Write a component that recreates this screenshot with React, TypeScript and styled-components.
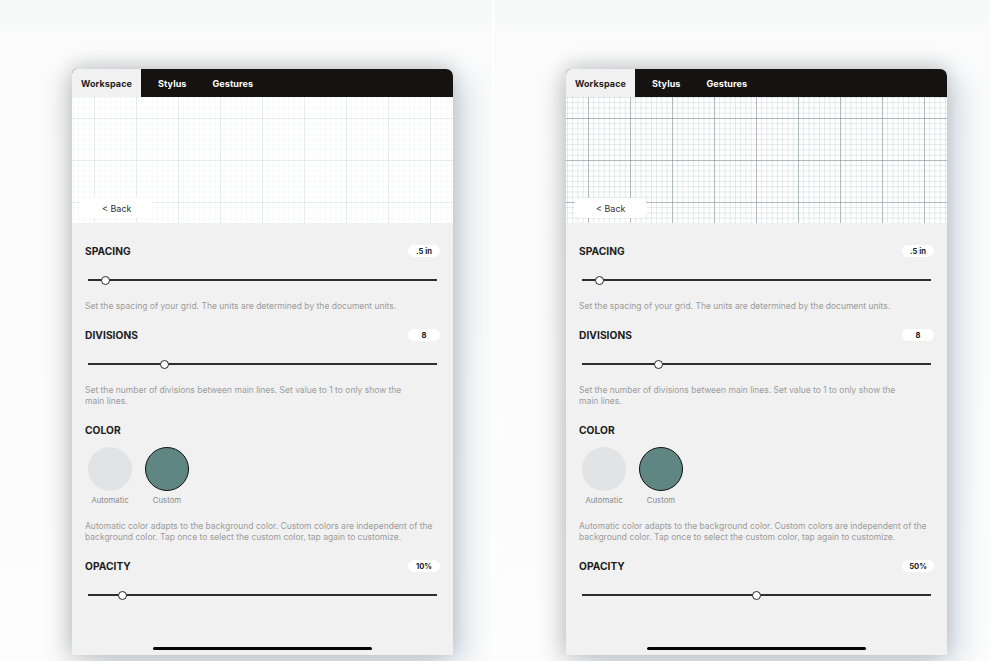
import React from "react";
import styled, { createGlobalStyle } from "styled-components";

const GlobalStyle = createGlobalStyle`
  html, body { margin: 0; padding: 0; background: #ffffff; }
  body { font-family: Inter, "Noto Sans", "Liberation Sans", sans-serif; }
  * { box-sizing: border-box; }
`;

const Page = styled.div`
  display: flex;
  width: 992px;
  height: 661px;
  overflow: hidden;
  background: #ffffff;
`;

const Half = styled.div<{ $w: number }>`
  width: ${(p) => p.$w}px;
  height: 661px;
  padding: 69px 0 0 72px;
  background: linear-gradient(180deg, #f7f8f8 0px, #fbfbfb 40px, #fdfdfd 100%);
  border-right: 2px solid #ffffff;
  flex-shrink: 0;
`;

const Panel = styled.div`
  width: 381px;
  height: 586px;
  position: relative;
  display: flex;
  flex-direction: column;
  background: #f1f1f1;
  border-radius: 5px 7px 0 0;
  box-shadow: 0 -6px 18px rgba(40, 40, 40, 0.16), -10px 8px 22px rgba(60, 60, 60, 0.14),
    16px 10px 28px rgba(140, 168, 190, 0.32);
`;

const TabBar = styled.div`
  height: 28px;
  display: flex;
  align-items: stretch;
  background: #151311;
  border-radius: 5px 7px 0 0;
  overflow: hidden;
`;

const Tab = styled.div<{ $active?: boolean; $lead: number }>`
  display: flex;
  align-items: center;
  justify-content: ${(p) => (p.$active ? "center" : "flex-start")};
  width: ${(p) => (p.$active ? "69px" : "auto")};
  padding-left: ${(p) => p.$lead}px;
  background: ${(p) => (p.$active ? "#f1f1f1" : "transparent")};
  color: ${(p) => (p.$active ? "#1e1e1e" : "#ffffff")};
  font-size: 9px;
  font-weight: 700;
  letter-spacing: 0.1px;
`;

const Canvas = styled.div<{ $major: string; $minor: string }>`
  height: 126px;
  position: relative;
  background-color: #ffffff;
  background-image: linear-gradient(to right, ${(p) => p.$major} 1px, transparent 1px),
    linear-gradient(to bottom, ${(p) => p.$major} 1px, transparent 1px),
    linear-gradient(to right, ${(p) => p.$minor} 1px, transparent 1px),
    linear-gradient(to bottom, ${(p) => p.$minor} 1px, transparent 1px);
  background-size: 42px 42px, 42px 42px, 5.25px 5.25px, 5.25px 5.25px;
  background-position: 22px 21px, 22px 21px, 22px 21px, 22px 21px;
`;

const BackButton = styled.div`
  position: absolute;
  left: 8px;
  bottom: 5px;
  width: 73px;
  height: 20px;
  border-radius: 8px;
  background: #ffffff;
  display: flex;
  align-items: center;
  padding-left: 22px;
  font-size: 9px;
  color: #333333;
`;

const Content = styled.div`
  flex: 1;
  padding: 21px 13px 0 13px;
  display: flex;
  flex-direction: column;
`;

const Header = styled.div<{ $gap?: number }>`
  height: 14px;
  display: flex;
  align-items: center;
  justify-content: space-between;
  margin-top: ${(p) => p.$gap ?? 0}px;
`;

const Title = styled.div`
  font-size: 10.2px;
  font-weight: 700;
  color: #1c1c1c;
  letter-spacing: 0.05px;
`;

const Pill = styled.div`
  width: 32px;
  height: 12px;
  border-radius: 6px;
  background: #ffffff;
  display: flex;
  align-items: center;
  justify-content: center;
  font-size: 7.6px;
  font-weight: 700;
  color: #222222;
`;

const SliderRow = styled.div`
  height: 20px;
  margin: 12px 3px 0 3px;
  position: relative;
  display: flex;
  align-items: center;
`;

const Track = styled.div`
  width: 100%;
  height: 1.6px;
  background: #2e2e2e;
`;

const Thumb = styled.div`
  position: absolute;
  top: 50%;
  width: 9px;
  height: 9px;
  margin: -4.5px 0 0 -4.5px;
  border-radius: 50%;
  background: #ffffff;
  border: 1px solid #2a2a2a;
`;

const Desc = styled.div<{ $gap: number }>`
  margin-top: ${(p) => p.$gap}px;
  font-size: 8.5px;
  line-height: 11px;
  color: #9c9c9c;
  white-space: nowrap;
`;

const Swatches = styled.div`
  display: flex;
  gap: 13px;
  margin: 10px 0 0 3px;
`;

const SwatchItem = styled.div`
  width: 44px;
  display: flex;
  flex-direction: column;
  align-items: center;
`;

const Circle = styled.div<{ $fill: string; $selected?: boolean }>`
  width: 44px;
  height: 44px;
  border-radius: 50%;
  background: ${(p) => p.$fill};
  border: ${(p) => (p.$selected ? "1.6px solid #111111" : "none")};
`;

const SwatchLabel = styled.div`
  margin-top: 4px;
  height: 10px;
  line-height: 10px;
  font-size: 7.8px;
  color: #8a8a8a;
  white-space: nowrap;
`;

const HomeBar = styled.div`
  position: absolute;
  left: 50%;
  bottom: 5px;
  width: 219px;
  height: 3.5px;
  margin-left: -109.5px;
  border-radius: 2px;
  background: #050505;
`;

type SliderProps = { value: number };
const Slider: React.FC<SliderProps> = ({ value }) => (
  <SliderRow>
    <Track />
    <Thumb style={{ left: `${value}%` }} />
  </SliderRow>
);

type ScreenProps = { opacity: number; major: string; minor: string; w: number };

const Screen: React.FC<ScreenProps> = ({ opacity, major, minor, w }) => (
  <Half $w={w}>
    <Panel>
      <TabBar>
        <Tab $active $lead={0}>Workspace</Tab>
        <Tab $lead={17}>Stylus</Tab>
        <Tab $lead={26}>Gestures</Tab>
      </TabBar>
      <Canvas $major={major} $minor={minor}>
        <BackButton>&lt; Back</BackButton>
      </Canvas>
      <Content>
        <Header>
          <Title>SPACING</Title>
          <Pill>.5 in</Pill>
        </Header>
        <Slider value={4.9} />
        <Desc $gap={11}>Set the spacing of your grid. The units are determined by the document units.</Desc>
        <Header $gap={16}>
          <Title>DIVISIONS</Title>
          <Pill>8</Pill>
        </Header>
        <Slider value={21.8} />
        <Desc $gap={11}>
          Set the number of divisions between main lines. Set value to 1 to only show the
          <br />
          main lines.
        </Desc>
        <Header $gap={16}>
          <Title>COLOR</Title>
        </Header>
        <Swatches>
          <SwatchItem>
            <Circle $fill="#e1e3e4" />
            <SwatchLabel>Automatic</SwatchLabel>
          </SwatchItem>
          <SwatchItem>
            <Circle $fill="#5f8683" $selected />
            <SwatchLabel>Custom</SwatchLabel>
          </SwatchItem>
        </Swatches>
        <Desc $gap={16}>
          Automatic color adapts to the background color. Custom colors are independent of the
          <br />
          background color. Tap once to select the custom color, tap again to customize.
        </Desc>
        <Header $gap={16}>
          <Title>OPACITY</Title>
          <Pill>{opacity}%</Pill>
        </Header>
        <Slider value={opacity} />
      </Content>
      <HomeBar />
    </Panel>
  </Half>
);

export default function App() {
  return (
    <>
      <GlobalStyle />
      <Page>
        <Screen w={494} opacity={10} major="rgba(120,140,145,0.12)" minor="rgba(120,140,145,0.05)" />
        <Screen w={498} opacity={50} major="rgba(120,140,145,0.5)" minor="rgba(120,140,145,0.2)" />
      </Page>
    </>
  );
}
